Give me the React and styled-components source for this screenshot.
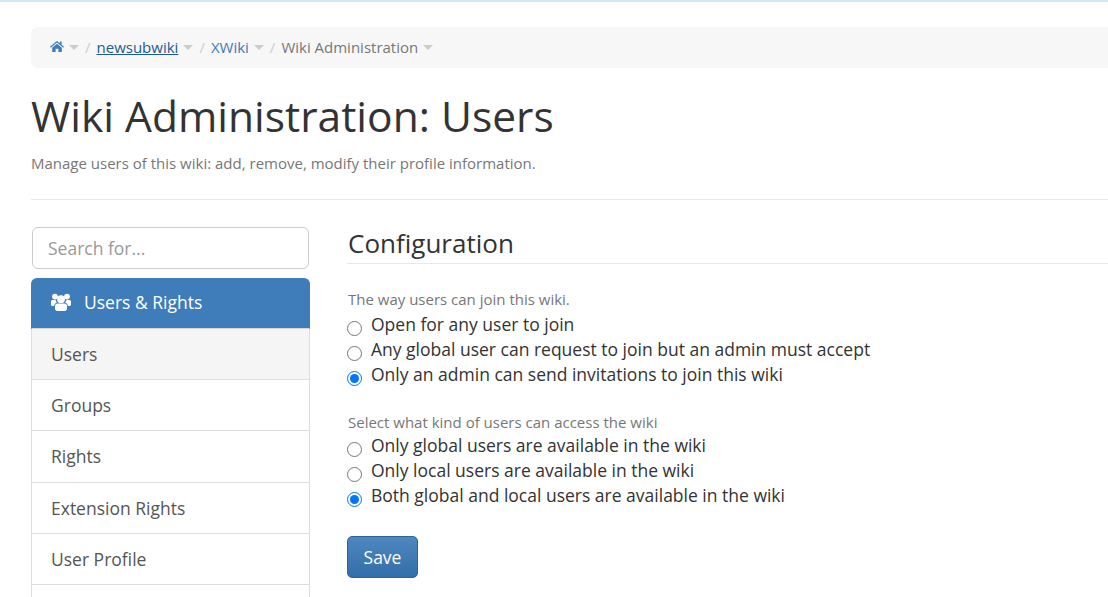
import React from "react";
import styled, { createGlobalStyle } from "styled-components";

const Global = createGlobalStyle`
  html, body {
    margin: 0;
    padding: 0;
    height: 100%;
    overflow: hidden;
    background: #fff;
    font-family: "Open Sans", "Liberation Sans", sans-serif;
    color: #333;
  }
`;

const Page = styled.div`
  width: 1108px;
  height: 597px;
  overflow: hidden;
  box-sizing: border-box;
  border-top: 2px solid #cfe8f2;
  padding: 25px 0 0 31px;
`;

const Breadcrumb = styled.nav`
  display: flex;
  align-items: center;
  width: 1120px;
  height: 41px;
  box-sizing: border-box;
  padding: 0 0 2px 19px;
  background: #f7f7f7;
  border-radius: 7px 0 0 7px;
  font-size: 15px;
  color: #777;
`;

const Crumb = styled.a`
  color: ${p => (p.$plain ? "#777" : p.$current ? "#1f5a94" : "#3e7cba")};
  text-decoration: ${p => (p.$current ? "underline" : "none")};
  display: inline-flex;
  align-items: center;
`;

const Caret = styled.span`
  width: 0;
  height: 0;
  margin: 2px 0 0 5px;
  border-left: 5px solid transparent;
  border-right: 5px solid transparent;
  border-top: 5px solid #ccc;
`;

const Slash = styled.span`
  color: #ccc;
  margin: 0 6px;
`;

const Title = styled.h1`
  margin: 22px 0 0;
  font-size: 42.5px;
  line-height: 52px;
  font-weight: 400;
  color: #333;
`;

const Hint = styled.p`
  margin: 11px 0 0;
  font-size: 15px;
  line-height: 20px;
  color: #777;
`;

const Rule = styled.hr`
  width: 1100px;
  margin: 26px 0 0;
  border: 0;
  border-top: 1px solid #e8e8e8;
`;

const Columns = styled.div`
  display: flex;
  gap: 37px;
  margin-top: 27px;
`;

const Sidebar = styled.aside`
  width: 279px;
  flex: none;
`;

const Search = styled.input`
  display: block;
  width: 277px;
  height: 42px;
  margin-left: 1px;
  box-sizing: border-box;
  padding: 0 15px;
  border: 1px solid #ccc;
  border-radius: 6px;
  font: 400 17.5px "Open Sans", sans-serif;
  color: #333;
  &::placeholder {
    color: #999;
    opacity: 1;
  }
`;

const Panel = styled.div`
  margin-top: 9px;
`;

const PanelHead = styled.div`
  display: flex;
  align-items: center;
  gap: 13px;
  height: 51px;
  box-sizing: border-box;
  padding: 0 0 4px 19px;
  background: #3e7cba;
  border: 1px solid #3e7cba;
  border-bottom-color: #d5d5d5;
  border-radius: 6px 6px 0 0;
  color: #fff;
  font-size: 17.5px;
`;

const NavItem = styled.div`
  display: flex;
  align-items: center;
  height: 51.2px;
  box-sizing: border-box;
  padding-left: 19px;
  border: 1px solid #ddd;
  border-top: 0;
  background: ${p => (p.$active ? "#f5f5f5" : "#fff")};
  color: #555;
  font-size: 17.5px;
`;

const Content = styled.main`
  width: 790px;
  flex: none;
`;

const Heading = styled.h2`
  margin: -1px 0 0;
  padding: 0 0 3px 1px;
  font-size: 26px;
  line-height: 34px;
  font-weight: 400;
  color: #333;
  border-bottom: 1px solid #e8e8e8;
`;

const Group = styled.fieldset`
  margin: ${p => p.$top}px 0 0;
  padding: 0;
  border: 0;
`;

const Legend = styled.div`
  padding-left: 1px;
  font-size: 15px;
  line-height: 20px;
  color: #777;
  margin-bottom: ${p => p.$gap}px;
`;

const Option = styled.label`
  display: flex;
  align-items: center;
  height: 25px;
  font-size: 17.5px;
  color: #333;
`;

const Radio = styled.input`
  width: 15px;
  height: 15px;
  margin: 9px 9px 0 0;
  flex: none;
`;

const SaveButton = styled.button`
  display: block;
  margin-top: 29px;
  width: 71px;
  height: 42px;
  border: 1px solid #2f6497;
  border-radius: 5px;
  background: linear-gradient(#4f88c0, #326ea8);
  color: #fff;
  font: 400 17.5px "Open Sans", sans-serif;
  padding: 0;
`;

const HomeIcon = () => (
  <svg width="14" height="13" viewBox="0 0 14 12" fill="currentColor">
    <path d="M7 0.4 0 6.3l0.8 1L7 2.1l6.2 5.2 0.8-1-2.4-2V0.9H9.8v1.9L7 0.4z" />
    <path d="M7 3.2 2.2 7.2V11.6h3.4V8.2h2.8v3.4h3.4V7.2L7 3.2z" />
  </svg>
);

const UsersIcon = () => (
  <svg width="20" height="18" viewBox="0 0 20 18" fill="currentColor">
    <circle cx="4" cy="3.6" r="2.9" />
    <circle cx="16" cy="3.6" r="2.9" />
    <circle cx="10" cy="6.2" r="3.9" />
    <path d="M0 8.6c0-1 .6-1.6 1.6-1.6h3c.2 1 .7 1.9 1.4 2.6-1.6.6-2.6 1.8-3 3.4H1.4C.6 13 0 12.4 0 11.6V8.6z" />
    <path d="M20 8.6c0-1-.6-1.6-1.6-1.6h-3c-.2 1-.7 1.9-1.4 2.6 1.6.6 2.6 1.8 3 3.4h1.6c.8 0 1.4-.6 1.4-1.4V8.6z" />
    <path d="M6.6 10.6h6.8c1.4 0 2.6 1.2 2.6 2.6v2.6c0 1.2-1 2.2-2.2 2.2H6.2C5 18 4 17 4 15.8v-2.6c0-1.4 1.2-2.6 2.6-2.6z" />
  </svg>
);

const joinOptions = [
  "Open for any user to join",
  "Any global user can request to join but an admin must accept",
  "Only an admin can send invitations to join this wiki",
];

const accessOptions = [
  "Only global users are available in the wiki",
  "Only local users are available in the wiki",
  "Both global and local users are available in the wiki",
];

const navItems = ["Users", "Groups", "Rights", "Extension Rights", "User Profile", ""];

const RadioGroup = ({ name, options, checked }) =>
  options.map((text, i) => (
    <Option key={text}>
      <Radio type="radio" name={name} defaultChecked={i === checked} />
      {text}
    </Option>
  ));

export default function App() {
  return (
    <Page>
      <Global />
      <Breadcrumb>
        <Crumb>
          <HomeIcon />
        </Crumb>
        <Caret />
        <Slash>/</Slash>
        <Crumb $current>newsubwiki</Crumb>
        <Caret />
        <Slash>/</Slash>
        <Crumb>XWiki</Crumb>
        <Caret />
        <Slash>/</Slash>
        <Crumb $plain>Wiki Administration</Crumb>
        <Caret />
      </Breadcrumb>
      <Title>Wiki Administration: Users</Title>
      <Hint>Manage users of this wiki: add, remove, modify their profile information.</Hint>
      <Rule />
      <Columns>
        <Sidebar>
          <Search placeholder="Search for..." />
          <Panel>
            <PanelHead>
              <UsersIcon />
              Users &amp; Rights
            </PanelHead>
            {navItems.map((item, i) => (
              <NavItem key={i} $active={i === 0}>
                {item}
              </NavItem>
            ))}
          </Panel>
        </Sidebar>
        <Content>
          <Heading>Configuration</Heading>
          <Group $top={25}>
            <Legend $gap={2}>The way users can join this wiki.</Legend>
            <RadioGroup name="join" options={joinOptions} checked={2} />
          </Group>
          <Group $top={26}>
            <Legend $gap={0}>Select what kind of users can access the wiki</Legend>
            <RadioGroup name="access" options={accessOptions} checked={2} />
          </Group>
          <SaveButton>Save</SaveButton>
        </Content>
      </Columns>
    </Page>
  );
}
